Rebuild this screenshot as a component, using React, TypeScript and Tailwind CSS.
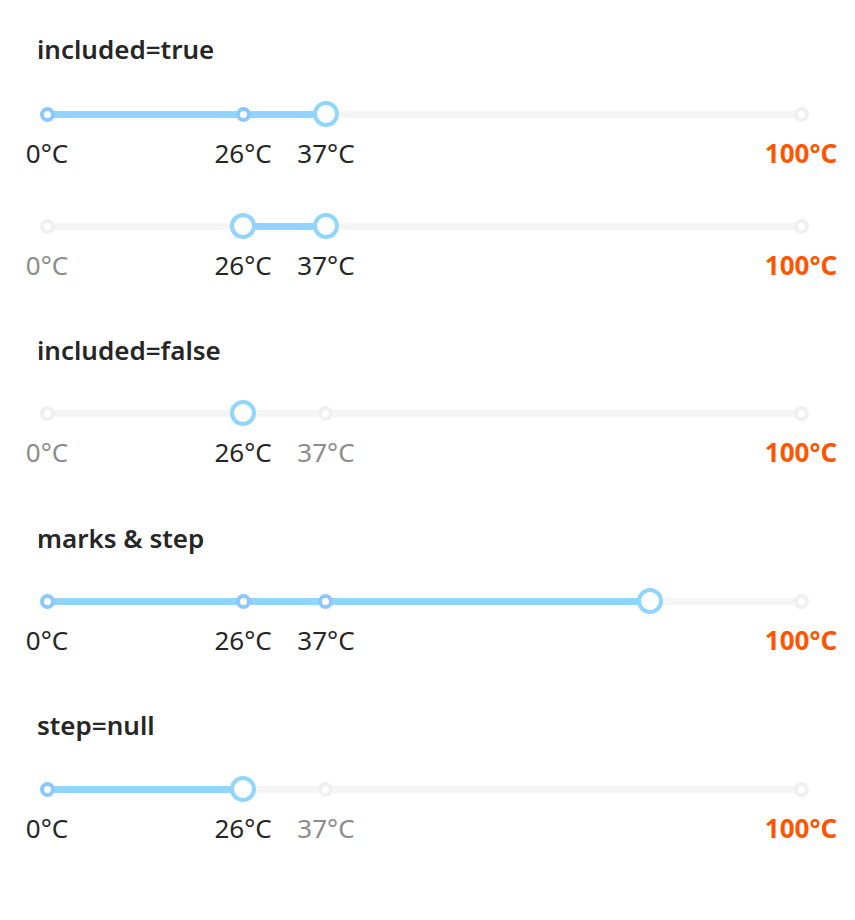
import React from "react";

type Val = number | [number, number];

const MARKS = [0, 26, 37, 100];
const WIDTH = 754;

function pos(v: number) {
  return (v / 100) * WIDTH;
}

function Slider({ value, included = true }: { value: Val; included?: boolean }) {
  const range = Array.isArray(value);
  const lo = range ? (value as [number, number])[0] : 0;
  const hi = range ? (value as [number, number])[1] : (value as number);
  const handles = range ? (value as [number, number]) : [value as number];

  const dotActive = (m: number) => included && m >= lo && m <= hi;
  const labelActive = (m: number) =>
    included ? m >= lo && m <= hi : handles.includes(m);

  return (
    <div className="ml-[47px] w-[754px]">
      <div className="relative h-[28px]">
        <div className="absolute left-0 right-0 top-[10.5px] h-[7px] rounded-full bg-[#f5f5f5]" />
        {included && (
          <div
            className="absolute top-[10.5px] h-[7px] rounded-full bg-[#91d5ff]"
            style={{ left: pos(lo), width: pos(hi) - pos(lo) }}
          />
        )}
        {MARKS.map((m) => (
          <div
            key={m}
            className={
              "absolute top-[6.5px] h-[15px] w-[15px] -ml-[7.5px] rounded-full border-4 bg-white " +
              (dotActive(m) ? "border-[#8cc8ff]" : "border-[#f0f0f0]")
            }
            style={{ left: pos(m) }}
          />
        ))}
        {handles.map((h, i) => (
          <div
            key={i}
            className="absolute top-[1px] h-[26px] w-[26px] -ml-[13px] rounded-full border-4 border-[#91d5ff] bg-white"
            style={{ left: pos(h) }}
          />
        ))}
      </div>
      <div className="relative mt-[9px] h-[32px]">
        {MARKS.map((m) => (
          <span
            key={m}
            className={
              "absolute top-0 -translate-x-1/2 whitespace-nowrap text-[26px] leading-[32px] " +
              (m === 100
                ? "font-bold text-[#ff5500]"
                : labelActive(m)
                ? "text-[#262626]"
                : "text-[#8c8c8c]")
            }
            style={{ left: pos(m) }}
          >
            {m}°C
          </span>
        ))}
      </div>
    </div>
  );
}

function Title({ children }: { children: React.ReactNode }) {
  return (
    <div className="pl-[37px] text-[26px] font-semibold leading-[32px] text-[#262626]">
      {children}
    </div>
  );
}

export default function App() {
  return (
    <div
      className="h-[920px] w-[855px] bg-white pt-[33px]"
      style={{ fontFamily: '"Noto Sans", "Open Sans", sans-serif' }}
    >
      <Title>included=true</Title>
      <div className="mt-[35px]">
        <Slider value={37} />
      </div>
      <div className="mt-[43px]">
        <Slider value={[26, 37]} />
      </div>
      <div className="mt-[53px]">
        <Title>included=false</Title>
      </div>
      <div className="mt-[33px]">
        <Slider value={26} included={false} />
      </div>
      <div className="mt-[54px]">
        <Title>marks &amp; step</Title>
      </div>
      <div className="mt-[33px]">
        <Slider value={80} />
      </div>
      <div className="mt-[53px]">
        <Title>step=null</Title>
      </div>
      <div className="mt-[34px]">
        <Slider value={26} />
      </div>
    </div>
  );
}
